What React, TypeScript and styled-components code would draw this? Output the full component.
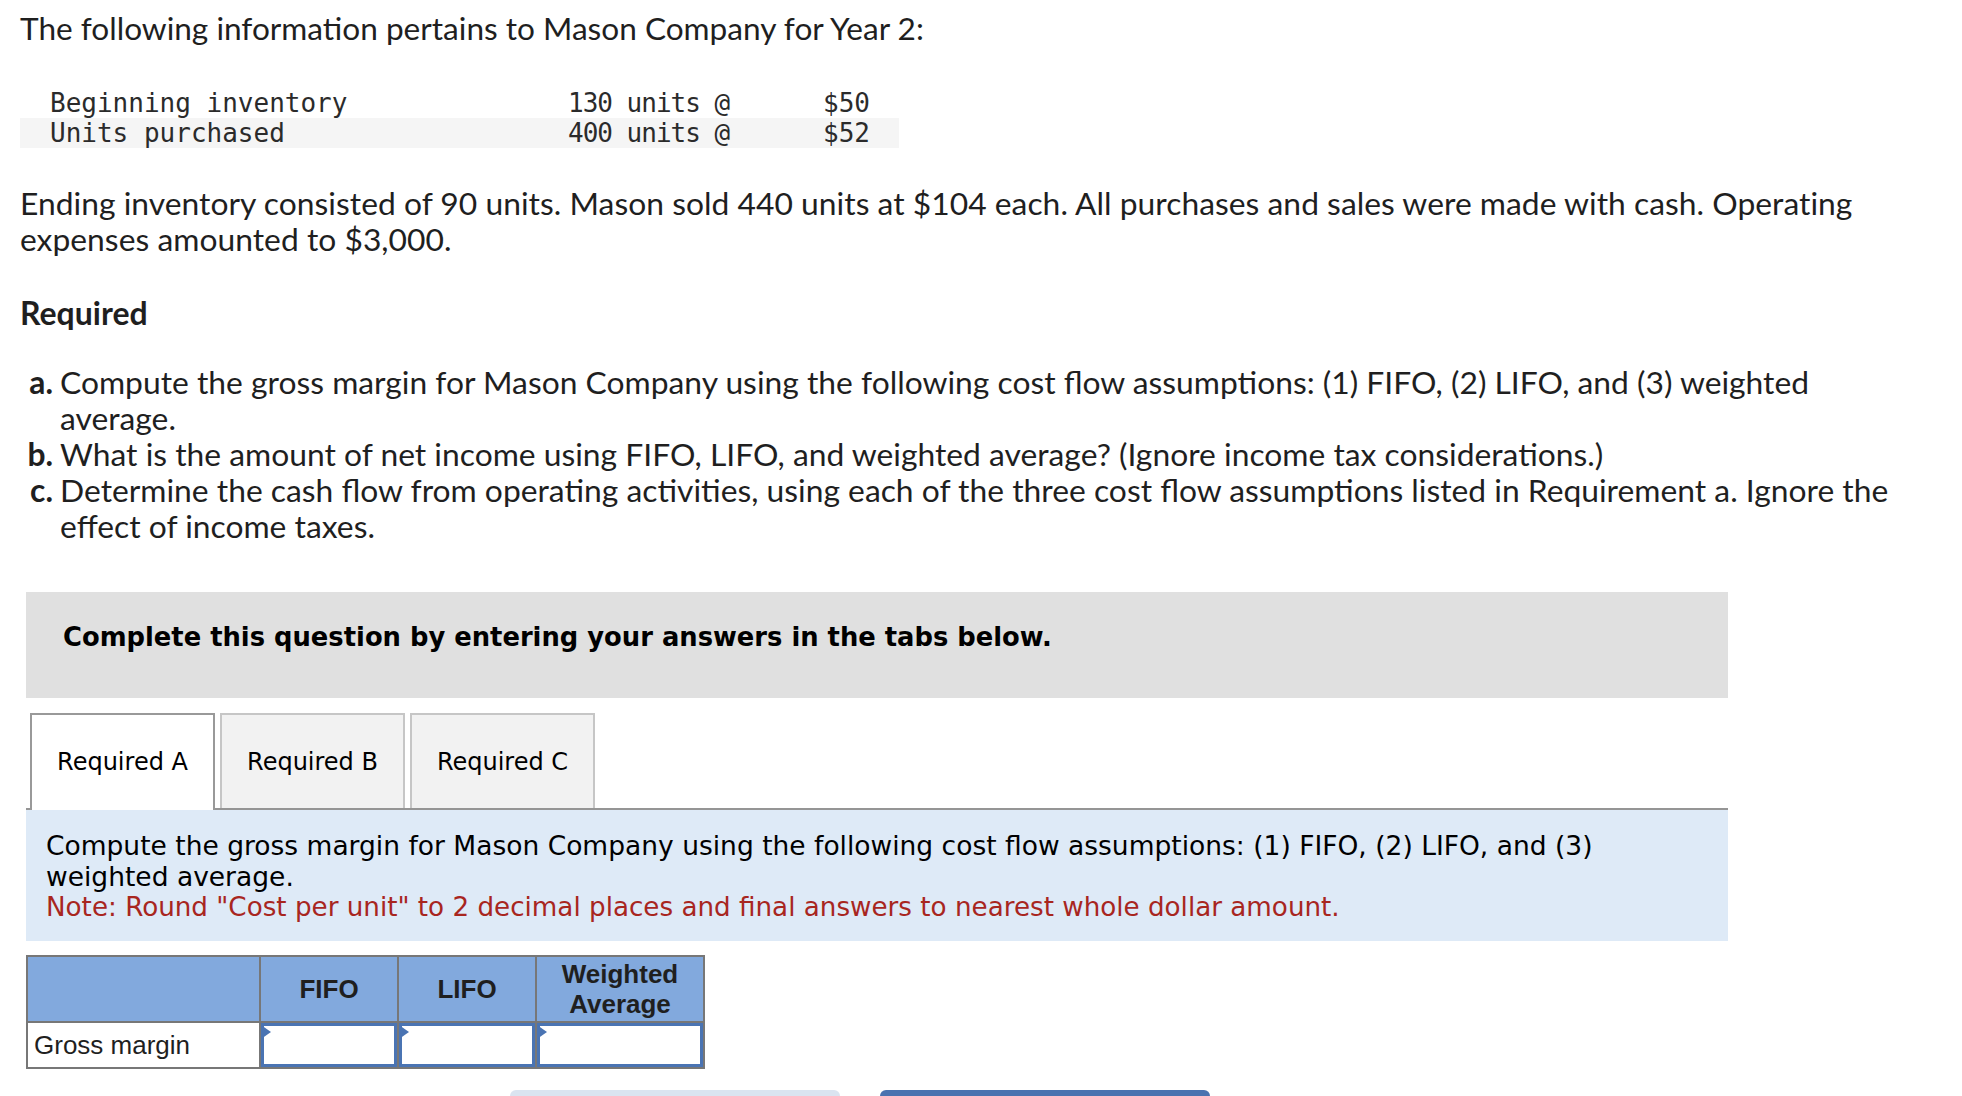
import React from 'react'
import styled, { createGlobalStyle } from 'styled-components'

const GlobalStyle = createGlobalStyle`
  html, body {
    margin: 0;
    padding: 0;
    background: #fff;
    overflow: hidden;
  }
  body {
    font-family: Lato, 'Open Sans', sans-serif;
    color: #1f1f1f;
  }
`

const inventory = [
  { label: 'Beginning inventory', qty: '130 units @', price: '$50' },
  { label: 'Units purchased', qty: '400 units @', price: '$52' },
]

const requirements = [
  {
    key: 'a.',
    lines: [
      'Compute the gross margin for Mason Company using the following cost flow assumptions: (1) FIFO, (2) LIFO, and (3) weighted',
      'average.',
    ],
  },
  {
    key: 'b.',
    lines: ['What is the amount of net income using FIFO, LIFO, and weighted average? (Ignore income tax considerations.)'],
  },
  {
    key: 'c.',
    lines: [
      'Determine the cash flow from operating activities, using each of the three cost flow assumptions listed in Requirement a. Ignore the',
      'effect of income taxes.',
    ],
  },
]

const App: React.FC = () => {
  return (
    <Page>
      <GlobalStyle />
      <Title>The following information pertains to Mason Company for Year 2:</Title>
      <Inventory>
        {inventory.map((row, i) => (
          <InvRow key={row.label} shaded={i % 2 === 1}>
            <span>{row.label}</span>
            <Qty>{row.qty}</Qty>
            <span>{row.price}</span>
          </InvRow>
        ))}
      </Inventory>
      <Para>
        <div>
          Ending inventory consisted of 90 units. Mason sold 440 units at $104 each. All purchases and sales were made with cash. Operating
        </div>
        <div>expenses amounted to $3,000.</div>
      </Para>
      <Heading>Required</Heading>
      <ReqList>
        {requirements.map((r) => (
          <ReqItem key={r.key}>
            <Marker>{r.key}</Marker>
            <div>
              {r.lines.map((l) => (
                <div key={l}>{l}</div>
              ))}
            </div>
          </ReqItem>
        ))}
      </ReqList>

      <Workspace>
        <Banner>Complete this question by entering your answers in the tabs below.</Banner>
        <Tabs>
          <Tab active>Required A</Tab>
          <Tab>Required B</Tab>
          <Tab>Required C</Tab>
        </Tabs>
        <Panel>
          <div>Compute the gross margin for Mason Company using the following cost flow assumptions: (1) FIFO, (2) LIFO, and (3)</div>
          <div>weighted average.</div>
          <Note>Note: Round "Cost per unit" to 2 decimal places and final answers to nearest whole dollar amount.</Note>
        </Panel>
        <Grid>
          <colgroup>
            <col style={{ width: 233 }} />
            <col style={{ width: 138 }} />
            <col style={{ width: 138 }} />
            <col style={{ width: 168 }} />
          </colgroup>
          <thead>
            <tr>
              <Th />
              <Th>FIFO</Th>
              <Th>LIFO</Th>
              <Th>
                Weighted
                <br />
                Average
              </Th>
            </tr>
          </thead>
          <tbody>
            <tr>
              <RowLabel>Gross margin</RowLabel>
              <InputCell>
                <InputBox />
              </InputCell>
              <InputCell>
                <InputBox />
              </InputCell>
              <InputCell>
                <InputBox />
              </InputCell>
            </tr>
          </tbody>
        </Grid>
        <Buttons>
          <NavButton />
          <NavButton primary />
        </Buttons>
      </Workspace>
    </Page>
  )
}

const Page = styled.div`
  padding: 10px 0 0 20px;
  width: 1920px;
`

const Title = styled.div`
  font-size: 31.6px;
  line-height: 36px;
  white-space: nowrap;
`

const Inventory = styled.div`
  margin-top: 42px;
  width: 879px;
  font-family: 'DejaVu Sans Mono', monospace;
  font-size: 26px;
  color: #2b2b2b;
`

const InvRow = styled.div<{ shaded?: boolean }>`
  display: grid;
  grid-template-columns: 548px 255px 1fr;
  align-items: center;
  height: 30px;
  line-height: 30px;
  background: ${(p) => (p.shaded ? '#f5f5f5' : 'transparent')};
  white-space: pre;
  span:first-child {
    padding-left: 30px;
  }
`

const Qty = styled.span`
  letter-spacing: -1px;
`

const Para = styled.div`
  margin-top: 37px;
  font-size: 31.8px;
  line-height: 36px;
  white-space: nowrap;
  letter-spacing: 0.02px;
`

const Heading = styled.div`
  margin-top: 38px;
  font-size: 32px;
  line-height: 36px;
  font-weight: 700;
`

const ReqList = styled.div`
  margin-top: 33px;
  font-size: 31.8px;
  line-height: 36px;
  white-space: nowrap;
`

const ReqItem = styled.div`
  display: grid;
  grid-template-columns: 40px 1fr;
`

const Marker = styled.span`
  font-weight: 700;
  text-align: right;
  padding-right: 7px;
  margin-left: -8px;
`

const Workspace = styled.div`
  margin: 48px 0 0 6px;
  width: 1702px;
  font-family: 'DejaVu Sans', Verdana, sans-serif;
`

const Banner = styled.div`
  box-sizing: border-box;
  height: 106px;
  padding: 30px 37px 0;
  background: #e0e0e0;
  font-size: 25.8px;
  line-height: 30px;
  font-weight: 700;
  color: #000;
`

const Tabs = styled.div`
  display: flex;
  gap: 5px;
  margin-top: 15px;
  padding-left: 4px;
  border-bottom: 2px solid #959595;
  height: 95px;
`

const Tab = styled.div<{ active?: boolean }>`
  box-sizing: border-box;
  width: 185px;
  height: ${(p) => (p.active ? '97px' : '95px')};
  display: flex;
  align-items: center;
  justify-content: center;
  font-size: 24px;
  color: #000;
  background: ${(p) => (p.active ? '#fff' : '#f2f2f2')};
  border: 2px solid ${(p) => (p.active ? '#999' : '#c6c6c6')};
  border-bottom: none;
  padding-bottom: ${(p) => (p.active ? '2px' : '0')};
`

const Panel = styled.div`
  padding: 20px 20px 18px;
  background: #deeaf7;
  font-size: 26.5px;
  line-height: 31px;
  color: #000;
`

const Note = styled.div`
  color: #a8261f;
  font-size: 26.2px;
`

const Grid = styled.table`
  margin-top: 14px;
  border-collapse: collapse;
  table-layout: fixed;
  width: 677px;
  font-family: 'Liberation Sans', Arial, sans-serif;
  font-size: 26px;
  color: #1f1f1f;
`

const Th = styled.th`
  height: 64px;
  padding: 0;
  background: #82a9dd;
  border: 2px solid #777;
  font-weight: 700;
  line-height: 30px;
  text-align: center;
  vertical-align: middle;
`

const RowLabel = styled.td`
  height: 44px;
  padding: 0 0 0 6px;
  border: 2px solid #777;
  text-align: left;
`

const InputCell = styled.td`
  padding: 0;
  border: 2px solid #777;
  height: 44px;
`

const InputBox = styled.div`
  position: relative;
  box-sizing: border-box;
  height: 44px;
  border: 3px solid #4a74b3;
  background: #fff;
  &::before {
    content: '';
    position: absolute;
    left: -3px;
    top: -1px;
    border-top: 7px solid transparent;
    border-bottom: 7px solid transparent;
    border-left: 10px solid #4a74b3;
  }
`

const Buttons = styled.div`
  display: flex;
  gap: 40px;
  margin: 21px 0 0 484px;
`

const NavButton = styled.div<{ primary?: boolean }>`
  width: 330px;
  height: 50px;
  border-radius: 6px 6px 0 0;
  background: ${(p) => (p.primary ? '#4a72b0' : '#dae4f0')};
`

export default App
